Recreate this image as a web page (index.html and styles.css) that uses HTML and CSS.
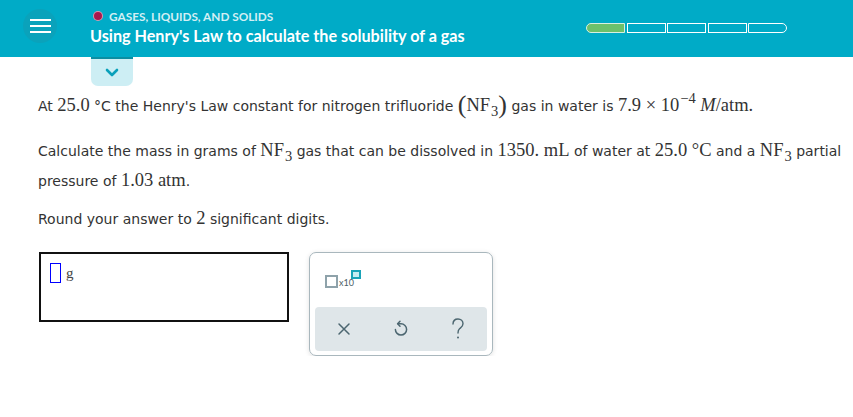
FILE: index.html
```html
<!DOCTYPE html>
<html>
<head>
<meta charset="utf-8">
<link rel="stylesheet" href="styles.css">
</head>
<body>
<header class="header">
  <div class="menu"><span></span><span></span><span></span></div>
  <div class="titles">
    <div class="cat"><span class="dot"></span><span class="cat-text">GASES, LIQUIDS, AND SOLIDS</span></div>
    <div class="title">Using Henry's Law to calculate the solubility of a gas</div>
  </div>
  <div class="progress">
    <span class="seg done"></span><span class="seg"></span><span class="seg"></span><span class="seg"></span><span class="seg last"></span>
  </div>
</header>
<div class="tab">
  <svg width="14" height="9" viewBox="0 0 14 9"><polyline points="2,2 7,7 12,2" fill="none" stroke="#0aa0ba" stroke-width="2.6" stroke-linecap="round" stroke-linejoin="round"/></svg>
</div>
<main class="question">
  <p class="p1">At <span class="m">25.0</span> °C the Henry's Law constant for nitrogen trifluoride <span class="m"><span class="paren">(</span>NF<sub>3</sub><span class="paren">)</span></span> gas in water is <span class="m">7.9 × 10<sup>−4</sup> <i>M</i>/atm.</span></p>
  <p class="p2">Calculate the mass in grams of <span class="m">NF<sub>3</sub></span> gas that can be dissolved in <span class="m">1350. mL</span> of water at <span class="m">25.0 °C</span> and a <span class="m">NF<sub>3</sub></span> partial<br>pressure of <span class="m">1.03 atm</span>.</p>
  <p class="p3">Round your answer to <span class="m">2</span> significant digits.</p>
  <div class="answer-row">
    <div class="answer-box"><span class="cursor"></span><span class="unit">g</span></div>
    <div class="panel">
      <div class="sci"><span class="box-gray"></span><span class="x10">x10</span><span class="box-teal"></span></div>
      <div class="tools">
        <span class="tool"><svg width="14" height="14" viewBox="0 0 14 14"><path d="M2 2 L12 12 M12 2 L2 12" stroke="#4c6670" stroke-width="1.5" stroke-linecap="round"/></svg></span>
        <span class="tool"><svg width="16" height="18" viewBox="0 0 16 18"><path d="M5 3.8 H8 A5.6 5.6 0 1 1 2.4 9.4" fill="none" stroke="#4c6670" stroke-width="1.5" stroke-linecap="round"/><path d="M7 1.3 L4.6 3.8 L7 6.3" fill="none" stroke="#4c6670" stroke-width="1.5" stroke-linecap="round" stroke-linejoin="round"/></svg></span>
        <span class="tool"><svg width="14" height="22" viewBox="0 0 14 22"><path d="M2 6 C2 2.5 4.5 1 7 1 C9.8 1 12 3 12 5.8 C12 8.5 10 9.5 8.5 10.8 C7.3 11.8 7 12.8 7 15" fill="none" stroke="#4c6670" stroke-width="1.4" stroke-linecap="round"/><circle cx="7" cy="19.5" r="1" fill="#4c6670"/></svg></span>
      </div>
    </div>
  </div>
</main>
</body>
</html>
```
FILE: styles.css
```css
body {
  margin: 0;
  background: #fff;
  color: #333;
  font-family: "DejaVu Sans", Verdana, sans-serif;
}

.header {
  height: 57px;
  background: #00abc7;
  display: flex;
  align-items: flex-start;
}

.menu {
  width: 34px;
  height: 34px;
  border-radius: 50%;
  background: #0aa2bb;
  margin: 9px 0 0 23px;
  display: flex;
  flex-direction: column;
  justify-content: center;
  align-items: center;
  gap: 4px;
}

.menu span {
  display: block;
  width: 21px;
  height: 2px;
  background: #fff;
}

.titles {
  margin-left: 33px;
  padding-top: 9px;
  font-family: Lato, "Open Sans", sans-serif;
}

.cat {
  display: flex;
  align-items: center;
  gap: 6px;
  padding-left: 3px;
  height: 14px;
}

.dot {
  width: 10px;
  height: 10px;
  box-sizing: border-box;
  border-radius: 50%;
  background: #a8184c;
  border: 1px solid rgba(255, 255, 255, 0.55);
}

.cat-text {
  font-size: 11.8px;
  font-weight: 700;
  color: #d3eff4;
}

.title {
  margin-top: 3px;
  font-size: 16.2px;
  font-weight: 700;
  color: #fff;
}

.progress {
  margin: 23px 66px 0 auto;
  display: flex;
  gap: 1.5px;
}

.seg {
  width: 39px;
  height: 10px;
  box-sizing: border-box;
  border: 1.5px solid #fff;
}

.seg.done {
  background: #6cc16b;
  border-color: #d9f0e0;
  border-radius: 5px 0 0 5px;
}

.seg.last {
  border-radius: 0 5px 5px 0;
}

.tab {
  margin-left: 91px;
  width: 42px;
  height: 27px;
  border-top: 2px solid #0b8ea2;
  background: #cdeef4;
  border-radius: 0 0 7px 7px;
  display: flex;
  align-items: center;
  justify-content: center;
}

.question {
  padding: 0 38px;
}

.question p {
  margin: 0;
  font-size: 14px;
  line-height: 30px;
  white-space: nowrap;
}

.p1 {
  margin-top: 5px !important;
}

.p2 {
  margin-top: 15px !important;
}

.p3 {
  margin-top: 8px !important;
}

.m {
  font-family: "Liberation Serif", "Times New Roman", serif;
  font-size: 18.5px;
  line-height: 20px;
}

.m sub {
  font-size: 14.5px;
  vertical-align: -5px;
  line-height: 0;
  margin-left: 1px;
}

.m sup {
  font-size: 14.5px;
  vertical-align: 8px;
  line-height: 0;
  margin-left: 1px;
}

.paren {
  font-size: 26px;
  line-height: 0;
  vertical-align: -2px;
  font-weight: 300;
}

.answer-row {
  display: flex;
  gap: 20px;
  margin: 18px 0 0 1px;
  align-items: flex-start;
}

.answer-box {
  width: 250px;
  height: 70px;
  box-sizing: border-box;
  border: 2px solid #111;
  padding: 9px 0 0 9px;
  display: flex;
  align-items: flex-start;
  gap: 5px;
}

.cursor {
  width: 11px;
  height: 20px;
  box-sizing: border-box;
  border: 1px solid #0000ff;
}

.unit {
  font-family: "Liberation Serif", serif;
  font-size: 15px;
  color: #444;
  line-height: 20px;
}

.panel {
  width: 184px;
  height: 104px;
  box-sizing: border-box;
  border: 1px solid #a9b7bd;
  border-radius: 7px;
  box-shadow: 0 1px 5px rgba(0, 0, 0, 0.12);
  display: flex;
  flex-direction: column;
  justify-content: space-between;
}

.sci {
  margin: 17px 0 0 15px;
  height: 18px;
  display: flex;
}

.box-gray {
  align-self: flex-end;
  width: 13px;
  height: 13px;
  box-sizing: border-box;
  border: 2px solid #8ea2aa;
}

.x10 {
  align-self: flex-end;
  font-family: Lato, sans-serif;
  font-size: 9px;
  color: #4b5d66;
  line-height: 10px;
  margin-left: 1px;
}

.box-teal {
  align-self: flex-start;
  width: 10px;
  height: 9px;
  box-sizing: border-box;
  border: 2px solid #1aa3b8;
  background: #c6ecf2;
  margin-left: -3px;
}

.tools {
  margin: 0 5px 4px 5px;
  height: 44px;
  background: #dfe6e9;
  border-radius: 4px;
  display: flex;
}

.tool {
  flex: 1;
  display: flex;
  align-items: center;
  justify-content: center;
}
```
